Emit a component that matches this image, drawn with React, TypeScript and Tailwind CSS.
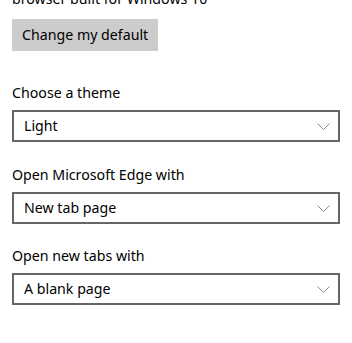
import React from "react";

function Chevron() {
  return (
    <svg width="13" height="7" viewBox="0 0 13 7" className="shrink-0">
      <path d="M0.5 0.5 L6.5 6.5 L12.5 0.5" fill="none" stroke="#8a8a8a" strokeWidth="1" />
    </svg>
  );
}

function Select({ value }: { value: string }) {
  return (
    <div className="flex h-8 w-[328px] items-center justify-between border-2 border-[#666666] bg-white pl-[10px] pr-[8px]">
      <span className="text-[14.2px] leading-5 text-black">{value}</span>
      <Chevron />
    </div>
  );
}

export default function App() {
  return (
    <div
      className="h-[343px] w-[352px] overflow-hidden bg-white px-3 text-black"
      style={{ fontFamily: '"Noto Sans", "Open Sans", sans-serif' }}
    >
      <p className="mt-[-11px] text-[14.2px] leading-5">browser built for Windows 10</p>
      <button className="mt-[10px] flex h-8 items-center bg-[#cccccc] px-[10px] text-[14.2px] leading-5 text-black">
        Change my default
      </button>
      <div className="mt-[32px] text-[14.2px] leading-5">Choose a theme</div>
      <div className="mt-[7px]">
        <Select value="Light" />
      </div>
      <div className="mt-[23px] text-[14.2px] leading-5">Open Microsoft Edge with</div>
      <div className="mt-[7px]">
        <Select value="New tab page" />
      </div>
      <div className="mt-[22px] text-[14.2px] leading-5">Open new tabs with</div>
      <div className="mt-[7px]">
        <Select value="A blank page" />
      </div>
    </div>
  );
}
